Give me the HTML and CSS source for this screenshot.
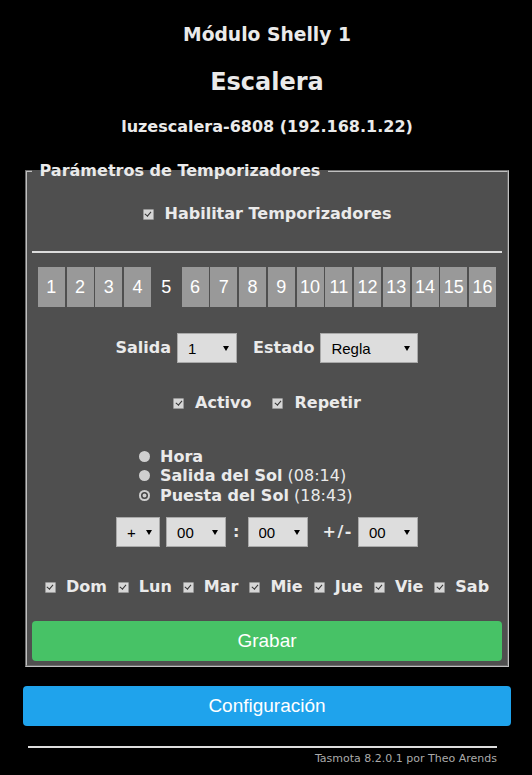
FILE: index.html
```html
<!DOCTYPE html>
<html lang="es">
<head>
  <meta charset="UTF-8" />
  <title>Escalera - Temporizadores</title>
  <link rel="stylesheet" href="styles.css">
</head>
<body>
  <div class="main">
    <h3>Módulo Shelly 1</h3>
    <h2>Escalera</h2>
    <h4>luzescalera-6808 (192.168.1.22)</h4>

    <fieldset>
      <legend><b>&nbsp;Parámetros de Temporizadores&nbsp;</b></legend>
      <form>
        <div class="row enable">
          <label class="chk"><input type="checkbox" checked><b>Habilitar Temporizadores</b></label>
        </div>
        <hr>

        <div class="tabs">
          <button type="button" class="tl">1</button>
          <button type="button" class="tl">2</button>
          <button type="button" class="tl">3</button>
          <button type="button" class="tl">4</button>
          <button type="button" class="tl on">5</button>
          <button type="button" class="tl">6</button>
          <button type="button" class="tl">7</button>
          <button type="button" class="tl">8</button>
          <button type="button" class="tl">9</button>
          <button type="button" class="tl">10</button>
          <button type="button" class="tl">11</button>
          <button type="button" class="tl">12</button>
          <button type="button" class="tl">13</button>
          <button type="button" class="tl">14</button>
          <button type="button" class="tl">15</button>
          <button type="button" class="tl">16</button>
        </div>

        <div class="row outs">
          <b class="lbl">Salida</b>
          <span class="sel gap"><select class="w60"><option>1</option></select></span>
          <b class="lbl">Estado</b>
          <span class="sel"><select class="w98"><option>Regla</option><option>Off</option><option>On</option><option>Toggle</option></select></span>
        </div>

        <div class="row act">
          <label class="chk"><input type="checkbox" checked><b>Activo</b></label>
          <label class="chk"><input type="checkbox" checked><b>Repetir</b></label>
        </div>

        <div class="sun">
          <label><input type="radio" name="mode"><b>Hora</b></label>
          <label><input type="radio" name="mode"><b>Salida del Sol</b> (08:14)</label>
          <label><input type="radio" name="mode" checked><b>Puesta del Sol</b> (18:43)</label>
        </div>

        <div class="row time">
          <span class="sel"><select class="w44"><option>+</option><option>-</option></select></span>
          <span class="sel"><select class="w60"><option>00</option></select></span>
          <b class="colon">:</b>
          <span class="sel"><select class="w60"><option>00</option></select></span>
          <b class="pm">+/-</b>
          <span class="sel"><select class="w60"><option>00</option></select></span>
        </div>

        <div class="row days">
          <label class="chk"><input type="checkbox" checked><b>Dom</b></label>
          <label class="chk"><input type="checkbox" checked><b>Lun</b></label>
          <label class="chk"><input type="checkbox" checked><b>Mar</b></label>
          <label class="chk"><input type="checkbox" checked><b>Mie</b></label>
          <label class="chk"><input type="checkbox" checked><b>Jue</b></label>
          <label class="chk"><input type="checkbox" checked><b>Vie</b></label>
          <label class="chk"><input type="checkbox" checked><b>Sab</b></label>
        </div>

        <button type="button" class="btn save">Grabar</button>
      </form>
    </fieldset>

    <button type="button" class="btn cfg">Configuración</button>

    <div class="footer">
      <hr>
      <a>Tasmota 8.2.0.1 por Theo Arends</a>
    </div>
  </div>
</body>
</html>
```

FILE: styles.css
```css
body {
  margin: 0;
  background: #000;
  color: #eaeaea;
  font-family: "DejaVu Sans", Verdana, sans-serif;
  font-size: 16px;
}
.main {
  width: 488px;
  margin-left: 23px;
  padding-top: 24px;
}
h2, h3, h4 {
  margin: 0;
  text-align: center;
}
h3 {
  font-size: 18.72px;
  line-height: 22px;
}
h2 {
  font-size: 24px;
  line-height: 28px;
  margin-top: 22px;
}
h4 {
  font-size: 16px;
  line-height: 20px;
  margin-top: 21px;
}
fieldset {
  margin: 24px 2px 0;
  padding: 0 5px 4px;
  border: 2px groove #c0c0c0;
  background: #4f4f4f;
  min-width: 0;
}
legend {
  padding: 0 2px;
  line-height: 20px;
}
.row {
  display: flex;
  justify-content: center;
  align-items: center;
  line-height: 20px;
}
.chk {
  display: inline-flex;
  align-items: center;
}
input[type=checkbox] {
  appearance: none;
  position: relative;
  width: 11px;
  height: 11px;
  margin: 0 11px 0 0;
  box-sizing: border-box;
  background: #d6d6d6;
  border: 1px solid #9a9a9a;
  border-radius: 1px;
}
input[type=checkbox]:checked::after {
  content: "";
  position: absolute;
  left: 2.5px;
  top: 0px;
  width: 2.5px;
  height: 5px;
  border-right: 1.6px solid #333;
  border-bottom: 1.6px solid #333;
  transform: rotate(40deg);
}
.enable {
  margin-top: 23px;
}
hr {
  border: 0;
  border-top: 2px solid #dcdcdc;
  margin: 27px 0 0;
}
.tabs {
  display: flex;
  justify-content: center;
  gap: 1.75px;
  margin-top: 14px;
}
.tl {
  width: 27px;
  height: 40px;
  padding: 0;
  border: 0;
  border-radius: 0;
  background: #999;
  color: #fff;
  font: 18px "Liberation Sans", Arial, sans-serif;
}
.tl.on {
  background: transparent;
}
.outs {
  margin-top: 26px;
}
.lbl {
  margin-right: 6px;
}
.sel {
  position: relative;
  display: inline-block;
  height: 30px;
}
.sel::after {
  content: "";
  position: absolute;
  right: 8px;
  top: 13px;
  border-left: 3px solid transparent;
  border-right: 3px solid transparent;
  border-top: 5px solid #000;
  pointer-events: none;
}
.sel.gap {
  margin-right: 16px;
}
select {
  appearance: none;
  height: 30px;
  margin: 0;
  padding: 0 0 0 10px;
  box-sizing: border-box;
  background: #dddddd;
  color: #000;
  border: 1px solid #a9a9a9;
  border-radius: 0;
  font: 15px "Liberation Sans", Arial, sans-serif;
}
.w44 { width: 44px; }
.w60 { width: 60px; }
.w98 { width: 98px; }
.act {
  margin-top: 30px;
}
.act .chk + .chk {
  margin-left: 21px;
}
.sun {
  margin-top: 34px;
  padding-left: 107px;
  line-height: 19.4px;
}
.sun label {
  display: block;
}
input[type=radio] {
  appearance: none;
  width: 11px;
  height: 11px;
  margin: 0 10px 0 0;
  border-radius: 50%;
  background: #cfcfcf;
  vertical-align: 0;
}
input[type=radio]:checked {
  box-shadow: inset 0 0 0 2px #cfcfcf, inset 0 0 0 3.5px #444;
}
.time {
  margin-top: 12px;
}
.time .sel + .sel {
  margin-left: 6px;
}
.colon {
  margin: 0 8px 0 7px;
}
.pm {
  margin: 0 5px 0 15px;
  letter-spacing: 1.5px;
}
.days {
  margin-top: 30px;
}
.days .chk + .chk {
  margin-left: 11px;
}
.days input[type=checkbox] {
  margin-right: 10px;
}
.btn {
  display: block;
  width: 100%;
  height: 40px;
  border: 0;
  border-radius: 4px;
  color: #fff;
  font: 19px "Liberation Sans", Arial, sans-serif;
}
.save {
  margin-top: 24px;
  background: #47c266;
}
.cfg {
  margin-top: 19px;
  background: #1fa3ec;
}
.footer {
  margin: 20px 14px 0 5px;
  text-align: right;
  font-size: 11px;
  line-height: 13px;
}
.footer hr {
  margin: 0 0 4px;
}
.footer a {
  color: #aaa;
}
```
